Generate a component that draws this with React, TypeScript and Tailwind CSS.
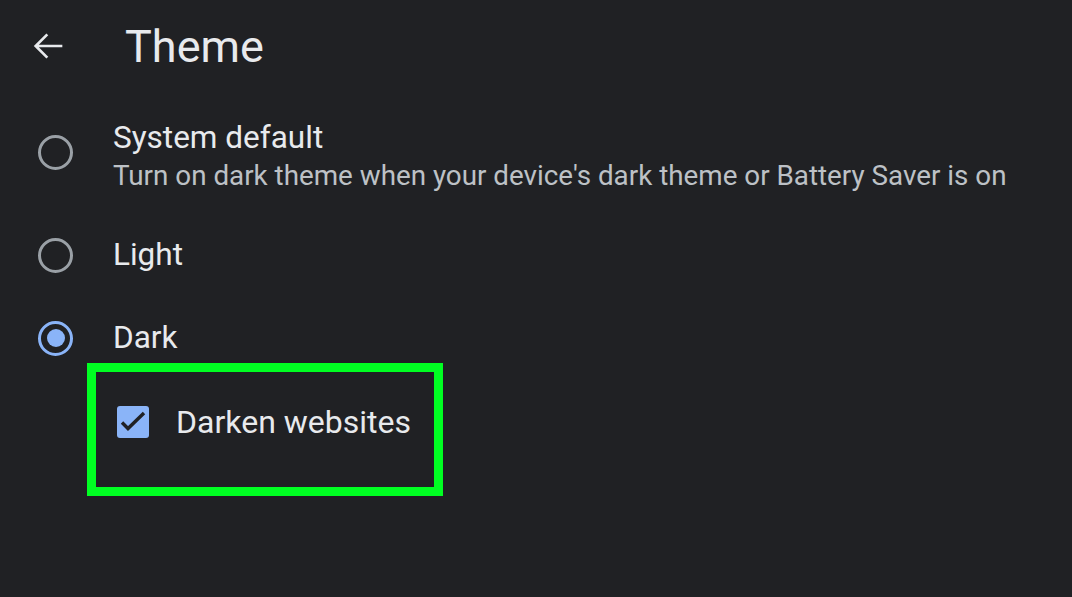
import { useState } from 'react'

type Mode = 'system' | 'light' | 'dark'

function Radio({ checked }: { checked: boolean }) {
  return (
    <span
      className={
        'flex h-[35px] w-[35px] shrink-0 items-center justify-center rounded-full border-[3px] ' +
        (checked ? 'border-[#8ab4f8]' : 'border-[#9aa0a6]')
      }
    >
      {checked && <span className="h-[18px] w-[18px] rounded-full bg-[#8ab4f8]" />}
    </span>
  )
}

export default function App() {
  const [mode, setMode] = useState<Mode>('dark')
  const [darken, setDarken] = useState(true)

  return (
    <div className="h-[597px] w-[1072px] overflow-hidden bg-[#202124] font-['Roboto',sans-serif] text-[#e8eaed]">
      {/* верхняя панель */}
      <div className="flex h-[92px] items-center">
        <button className="ml-[29px] flex h-[40px] w-[40px] items-center justify-center">
          <svg width="40" height="40" viewBox="0 0 24 24" fill="none">
            <path d="M20 12H4M11 5l-7 7 7 7" stroke="#e8eaed" strokeWidth="1.6" />
          </svg>
        </button>
        <h1 className="ml-[56px] text-[45px] leading-none">Theme</h1>
      </div>

      <div className="flex flex-col">
        <button onClick={() => setMode('system')} className="flex items-start pl-[38px] pt-[26px] text-left">
          <span className="mt-[17px]">
            <Radio checked={mode === 'system'} />
          </span>
          <div className="ml-[40px] flex flex-col">
            <span className="text-[31.5px] leading-[40px]">System default</span>
            <span className="text-[27.8px] leading-[36px] text-[#bdc1c6]">
              Turn on dark theme when your device's dark theme or Battery Saver is on
            </span>
          </div>
        </button>

        <button onClick={() => setMode('light')} className="mt-[41px] flex items-center pl-[38px] text-left">
          <Radio checked={mode === 'light'} />
          <span className="ml-[40px] text-[31.5px] leading-[40px]">Light</span>
        </button>

        <button onClick={() => setMode('dark')} className="mt-[43px] flex items-center pl-[38px] text-left">
          <Radio checked={mode === 'dark'} />
          <span className="ml-[40px] text-[31.5px] leading-[40px]">Dark</span>
        </button>

        <div className="ml-[87px] mt-[5px] flex h-[133px] w-[356px] items-start border-[9px] border-[#00ff22] pl-[21px] pt-[30px]">
          <button onClick={() => setDarken(!darken)} className="flex items-center">
            <span className="flex h-[32px] w-[32px] items-center justify-center rounded-[3px] bg-[#8ab4f8]">
              {darken && (
                <svg width="32" height="32" viewBox="0 0 32 32" fill="none">
                  <path d="M5 16.5l6 6L27 7" stroke="#202124" strokeWidth="3.4" />
                </svg>
              )}
            </span>
            <span className="ml-[27px] text-[32px] leading-[40px]">Darken websites</span>
          </button>
        </div>
      </div>
    </div>
  )
}
